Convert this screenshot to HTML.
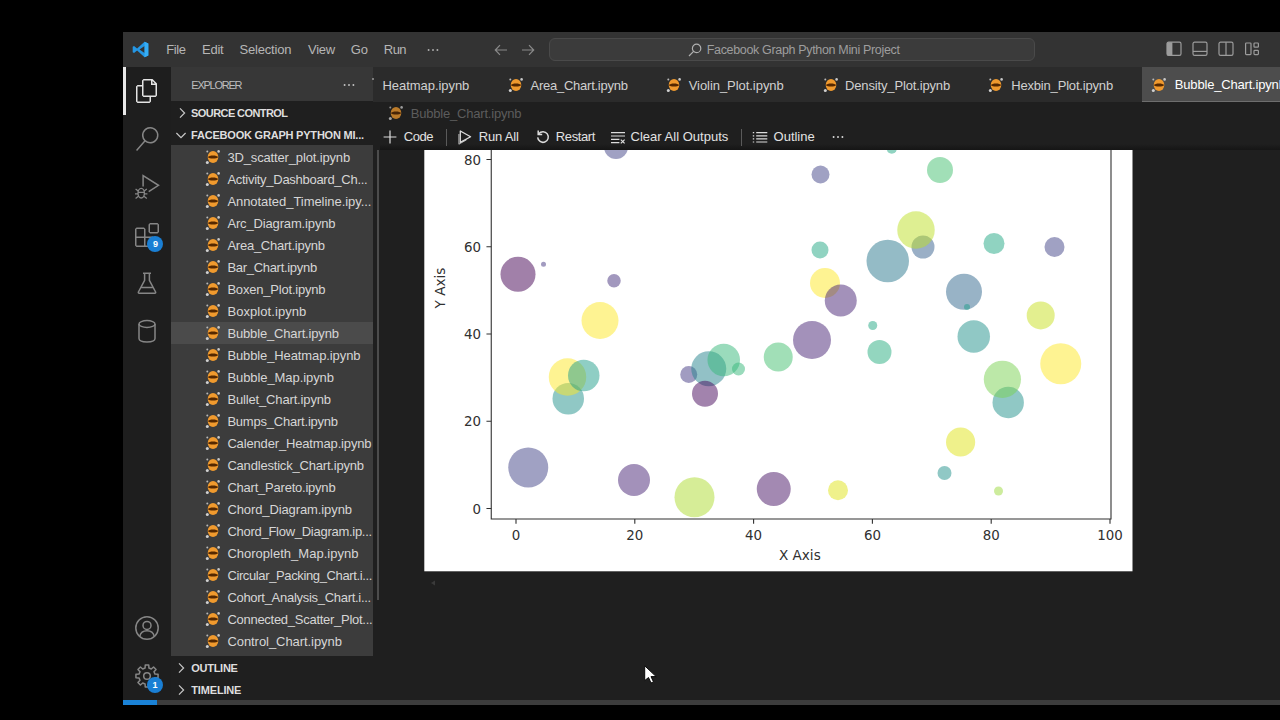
<!DOCTYPE html>
<html lang="en">
<head>
<meta charset="utf-8">
<title>Bubble_Chart.ipynb - Facebook Graph Python Mini Project - Visual Studio Code</title>
<style>
html,body{margin:0;padding:0;background:#000;}
body{width:1280px;height:720px;overflow:hidden;position:relative;font-family:"Liberation Sans",sans-serif;}
.b{position:absolute;}
.t{position:absolute;white-space:pre;line-height:20px;height:20px;font-family:"Liberation Sans",sans-serif;}
svg{position:absolute;overflow:visible;}
svg text{font-family:"DejaVu Sans","Liberation Sans",sans-serif;}
</style>
</head>
<body>
<!-- window -->
<div class="b" style="left:123px;top:32px;width:1157px;height:673px;background:#1f1f1f"></div>
<!-- title bar -->
<div class="b" style="left:123px;top:32px;width:1157px;height:35px;background:#333333"></div>
<div class="b" style="left:548.5px;top:38px;width:486.5px;height:22.6px;background:#3b3b3b;border:1px solid #4a4a4a;border-radius:6px;box-sizing:border-box"></div>
<!-- activity bar -->
<div class="b" style="left:123px;top:67px;width:48px;height:633px;background:#1e1e1e"></div>
<div class="b" style="left:123px;top:67px;width:2.5px;height:48px;background:#e8e8e8"></div>
<!-- sidebar -->
<div class="b" style="left:171px;top:66.8px;width:201.8px;height:34.7px;background:#373737"></div>
<div class="b" style="left:171px;top:145.4px;width:201.5px;height:510.7px;background:#3c3c3c"></div>
<div class="b" style="left:171px;top:322px;width:201.5px;height:22px;background:#4b4b4b"></div>
<div class="b" style="left:376.6px;top:149.6px;width:2.6px;height:450px;background:#4c4c4c"></div>
<!-- tab bar -->
<div class="b" style="left:372.5px;top:67px;width:907.5px;height:34.5px;background:#2b2b2b"></div>
<div class="b" style="left:1142px;top:67px;width:138px;height:35px;background:#4d4d4d"></div>
<div class="b" style="left:1142px;top:100.6px;width:138px;height:1.4px;background:#6e6e6e"></div>
<!-- toolbar shadow -->
<div class="b" style="left:380px;top:144px;width:900px;height:6px;background:linear-gradient(#1f1f1f,#151515)"></div>
<!-- toolbar separators -->
<div class="b" style="left:446.3px;top:129px;width:1px;height:17px;background:#5a5a5a"></div>
<div class="b" style="left:741px;top:129px;width:1px;height:17px;background:#5a5a5a"></div>
<!-- status bar -->
<div class="b" style="left:123px;top:700px;width:1157px;height:4.8px;background:#3c3c3c"></div>
<div class="b" style="left:123px;top:700px;width:34.3px;height:4.8px;background:#1a82d6"></div>
<!-- chart output -->
<svg width="1280" height="720" viewBox="0 0 1280 720" style="left:0;top:0">
<defs><clipPath id="cp"><rect x="424.3" y="150" width="708.2" height="421.29999999999995"/></clipPath></defs>
<rect x="424.3" y="150" width="708.2" height="421.3" fill="#ffffff"/>
<g clip-path="url(#cp)">
<g fill-opacity="0.5">
<circle cx="518" cy="274.25" r="17.5" fill="#440154"/>
<circle cx="543.5" cy="264.25" r="2.5" fill="#453781"/>
<circle cx="614" cy="280.75" r="6.75" fill="#46327e"/>
<circle cx="616" cy="147" r="12" fill="#414487"/>
<circle cx="600" cy="320.5" r="18.5" fill="#fde725"/>
<circle cx="820.5" cy="174.5" r="9" fill="#414487"/>
<circle cx="940" cy="170" r="13" fill="#44bf70"/>
<circle cx="891.75" cy="148.75" r="5" fill="#22a884"/>
<circle cx="923" cy="247" r="11.5" fill="#355f8d"/>
<circle cx="916" cy="230" r="18.75" fill="#bddf26"/>
<circle cx="820" cy="250" r="8.5" fill="#22a884"/>
<circle cx="887.75" cy="261" r="21.25" fill="#2a788e"/>
<circle cx="825" cy="283" r="15" fill="#fde725"/>
<circle cx="840.75" cy="300.5" r="16" fill="#482475"/>
<circle cx="994" cy="243.5" r="10.5" fill="#22a884"/>
<circle cx="1054.5" cy="247" r="10" fill="#414487"/>
<circle cx="964" cy="291.75" r="18" fill="#31688e"/>
<circle cx="967" cy="307" r="3" fill="#1f9e89"/>
<circle cx="1040.7" cy="315.4" r="14" fill="#c8e020"/>
<circle cx="568.25" cy="398.75" r="15.75" fill="#21918c"/>
<circle cx="567.5" cy="377" r="18.75" fill="#fde725"/>
<circle cx="583.75" cy="375.5" r="15.75" fill="#1f9e89"/>
<circle cx="528.25" cy="467.5" r="20" fill="#414487"/>
<circle cx="634" cy="480" r="16" fill="#482475"/>
<circle cx="694.5" cy="497.25" r="20" fill="#addc30"/>
<circle cx="688.75" cy="374.5" r="8.5" fill="#443983"/>
<circle cx="708.75" cy="368.75" r="17.5" fill="#25838e"/>
<circle cx="723.75" cy="360" r="16.25" fill="#35b779"/>
<circle cx="705" cy="393.75" r="13" fill="#46085c"/>
<circle cx="738.5" cy="369" r="6.5" fill="#35b779"/>
<circle cx="812" cy="340" r="19" fill="#482475"/>
<circle cx="778.25" cy="357" r="14.5" fill="#44bf70"/>
<circle cx="872.75" cy="325.5" r="4.5" fill="#22a884"/>
<circle cx="879.5" cy="352" r="12" fill="#28ae80"/>
<circle cx="973.75" cy="336.5" r="16.25" fill="#21918c"/>
<circle cx="1060.75" cy="363.75" r="20.5" fill="#fde725"/>
<circle cx="1008.2" cy="402.5" r="15.7" fill="#21918c"/>
<circle cx="1002.4" cy="379.3" r="18.6" fill="#7ad151"/>
<circle cx="960.6" cy="442" r="14.6" fill="#dfe318"/>
<circle cx="944.5" cy="473" r="7" fill="#21918c"/>
<circle cx="998.5" cy="491" r="4.5" fill="#9bd93c"/>
<circle cx="773.75" cy="489" r="17" fill="#471365"/>
<circle cx="838" cy="490.25" r="10" fill="#dfe318"/>
</g>
<path d="M491.25 100V519H1111V100" fill="none" stroke="#303030" stroke-width="1.1"/>
<path d="M516.00 519v4.8" stroke="#303030" stroke-width="1.1"/>
<path d="M634.80 519v4.8" stroke="#303030" stroke-width="1.1"/>
<path d="M753.60 519v4.8" stroke="#303030" stroke-width="1.1"/>
<path d="M872.40 519v4.8" stroke="#303030" stroke-width="1.1"/>
<path d="M991.20 519v4.8" stroke="#303030" stroke-width="1.1"/>
<path d="M1110.00 519v4.8" stroke="#303030" stroke-width="1.1"/>
<path d="M491.25 508.50h-4.8" stroke="#303030" stroke-width="1.1"/>
<path d="M491.25 421.25h-4.8" stroke="#303030" stroke-width="1.1"/>
<path d="M491.25 334.00h-4.8" stroke="#303030" stroke-width="1.1"/>
<path d="M491.25 246.75h-4.8" stroke="#303030" stroke-width="1.1"/>
<path d="M491.25 159.50h-4.8" stroke="#303030" stroke-width="1.1"/>
</g>
<text x="516.00" y="540" font-size="13.4" text-anchor="middle" fill="#303030">0</text>
<text x="634.80" y="540" font-size="13.4" text-anchor="middle" fill="#303030">20</text>
<text x="753.60" y="540" font-size="13.4" text-anchor="middle" fill="#303030">40</text>
<text x="872.40" y="540" font-size="13.4" text-anchor="middle" fill="#303030">60</text>
<text x="991.20" y="540" font-size="13.4" text-anchor="middle" fill="#303030">80</text>
<text x="1110.00" y="540" font-size="13.4" text-anchor="middle" fill="#303030">100</text>
<text x="481" y="513.50" font-size="13.4" text-anchor="end" fill="#303030">0</text>
<text x="481" y="426.25" font-size="13.4" text-anchor="end" fill="#303030">20</text>
<text x="481" y="339.00" font-size="13.4" text-anchor="end" fill="#303030">40</text>
<text x="481" y="251.75" font-size="13.4" text-anchor="end" fill="#303030">60</text>
<text x="481" y="164.50" font-size="13.4" text-anchor="end" fill="#303030">80</text>
<text x="799.8" y="560" font-size="13.6" text-anchor="middle" fill="#303030">X Axis</text>
<text transform="translate(444.8 288) rotate(-90)" font-size="13.6" text-anchor="middle" fill="#303030">Y Axis</text>
<path d="M435 580.5v5l-4 -2.5z" fill="#3a3a3a"/>
</svg>
<svg style="left:205.0px;top:149.1px" width="16" height="16" viewBox="0 0 16 16"><ellipse cx="8" cy="8" rx="5.3" ry="6" fill="#f09a2e"/><path d="M2.800 8C4.200 5.900 11.800 5.900 13.200 8C11.800 10.100 4.200 10.100 2.800 8z" fill="#552800"/><circle cx="2.3" cy="2.5" r="1" fill="#b8b8b8"/><circle cx="13.6" cy="2.4" r="1.3" fill="#c8c8c8"/><circle cx="2.3" cy="13.6" r="1.5" fill="#d0d0d0"/></svg>
<svg style="left:205.0px;top:171.1px" width="16" height="16" viewBox="0 0 16 16"><ellipse cx="8" cy="8" rx="5.3" ry="6" fill="#f09a2e"/><path d="M2.800 8C4.200 5.900 11.800 5.900 13.200 8C11.800 10.100 4.200 10.100 2.800 8z" fill="#552800"/><circle cx="2.3" cy="2.5" r="1" fill="#b8b8b8"/><circle cx="13.6" cy="2.4" r="1.3" fill="#c8c8c8"/><circle cx="2.3" cy="13.6" r="1.5" fill="#d0d0d0"/></svg>
<svg style="left:205.0px;top:193.1px" width="16" height="16" viewBox="0 0 16 16"><ellipse cx="8" cy="8" rx="5.3" ry="6" fill="#f09a2e"/><path d="M2.800 8C4.200 5.900 11.800 5.900 13.200 8C11.800 10.100 4.200 10.100 2.800 8z" fill="#552800"/><circle cx="2.3" cy="2.5" r="1" fill="#b8b8b8"/><circle cx="13.6" cy="2.4" r="1.3" fill="#c8c8c8"/><circle cx="2.3" cy="13.6" r="1.5" fill="#d0d0d0"/></svg>
<svg style="left:205.0px;top:215.1px" width="16" height="16" viewBox="0 0 16 16"><ellipse cx="8" cy="8" rx="5.3" ry="6" fill="#f09a2e"/><path d="M2.800 8C4.200 5.900 11.800 5.900 13.200 8C11.800 10.100 4.200 10.100 2.800 8z" fill="#552800"/><circle cx="2.3" cy="2.5" r="1" fill="#b8b8b8"/><circle cx="13.6" cy="2.4" r="1.3" fill="#c8c8c8"/><circle cx="2.3" cy="13.6" r="1.5" fill="#d0d0d0"/></svg>
<svg style="left:205.0px;top:237.1px" width="16" height="16" viewBox="0 0 16 16"><ellipse cx="8" cy="8" rx="5.3" ry="6" fill="#f09a2e"/><path d="M2.800 8C4.200 5.900 11.800 5.900 13.200 8C11.800 10.100 4.200 10.100 2.800 8z" fill="#552800"/><circle cx="2.3" cy="2.5" r="1" fill="#b8b8b8"/><circle cx="13.6" cy="2.4" r="1.3" fill="#c8c8c8"/><circle cx="2.3" cy="13.6" r="1.5" fill="#d0d0d0"/></svg>
<svg style="left:205.0px;top:259.1px" width="16" height="16" viewBox="0 0 16 16"><ellipse cx="8" cy="8" rx="5.3" ry="6" fill="#f09a2e"/><path d="M2.800 8C4.200 5.900 11.800 5.900 13.200 8C11.800 10.100 4.200 10.100 2.800 8z" fill="#552800"/><circle cx="2.3" cy="2.5" r="1" fill="#b8b8b8"/><circle cx="13.6" cy="2.4" r="1.3" fill="#c8c8c8"/><circle cx="2.3" cy="13.6" r="1.5" fill="#d0d0d0"/></svg>
<svg style="left:205.0px;top:281.1px" width="16" height="16" viewBox="0 0 16 16"><ellipse cx="8" cy="8" rx="5.3" ry="6" fill="#f09a2e"/><path d="M2.800 8C4.200 5.900 11.800 5.900 13.200 8C11.800 10.100 4.200 10.100 2.800 8z" fill="#552800"/><circle cx="2.3" cy="2.5" r="1" fill="#b8b8b8"/><circle cx="13.6" cy="2.4" r="1.3" fill="#c8c8c8"/><circle cx="2.3" cy="13.6" r="1.5" fill="#d0d0d0"/></svg>
<svg style="left:205.0px;top:303.1px" width="16" height="16" viewBox="0 0 16 16"><ellipse cx="8" cy="8" rx="5.3" ry="6" fill="#f09a2e"/><path d="M2.800 8C4.200 5.900 11.800 5.900 13.200 8C11.800 10.100 4.200 10.100 2.800 8z" fill="#552800"/><circle cx="2.3" cy="2.5" r="1" fill="#b8b8b8"/><circle cx="13.6" cy="2.4" r="1.3" fill="#c8c8c8"/><circle cx="2.3" cy="13.6" r="1.5" fill="#d0d0d0"/></svg>
<svg style="left:205.0px;top:325.1px" width="16" height="16" viewBox="0 0 16 16"><ellipse cx="8" cy="8" rx="5.3" ry="6" fill="#f09a2e"/><path d="M2.800 8C4.200 5.900 11.800 5.900 13.200 8C11.800 10.100 4.200 10.100 2.800 8z" fill="#552800"/><circle cx="2.3" cy="2.5" r="1" fill="#b8b8b8"/><circle cx="13.6" cy="2.4" r="1.3" fill="#c8c8c8"/><circle cx="2.3" cy="13.6" r="1.5" fill="#d0d0d0"/></svg>
<svg style="left:205.0px;top:347.1px" width="16" height="16" viewBox="0 0 16 16"><ellipse cx="8" cy="8" rx="5.3" ry="6" fill="#f09a2e"/><path d="M2.800 8C4.200 5.900 11.800 5.900 13.200 8C11.800 10.100 4.200 10.100 2.800 8z" fill="#552800"/><circle cx="2.3" cy="2.5" r="1" fill="#b8b8b8"/><circle cx="13.6" cy="2.4" r="1.3" fill="#c8c8c8"/><circle cx="2.3" cy="13.6" r="1.5" fill="#d0d0d0"/></svg>
<svg style="left:205.0px;top:369.1px" width="16" height="16" viewBox="0 0 16 16"><ellipse cx="8" cy="8" rx="5.3" ry="6" fill="#f09a2e"/><path d="M2.800 8C4.200 5.900 11.800 5.900 13.200 8C11.800 10.100 4.200 10.100 2.800 8z" fill="#552800"/><circle cx="2.3" cy="2.5" r="1" fill="#b8b8b8"/><circle cx="13.6" cy="2.4" r="1.3" fill="#c8c8c8"/><circle cx="2.3" cy="13.6" r="1.5" fill="#d0d0d0"/></svg>
<svg style="left:205.0px;top:391.1px" width="16" height="16" viewBox="0 0 16 16"><ellipse cx="8" cy="8" rx="5.3" ry="6" fill="#f09a2e"/><path d="M2.800 8C4.200 5.900 11.800 5.900 13.200 8C11.800 10.100 4.200 10.100 2.800 8z" fill="#552800"/><circle cx="2.3" cy="2.5" r="1" fill="#b8b8b8"/><circle cx="13.6" cy="2.4" r="1.3" fill="#c8c8c8"/><circle cx="2.3" cy="13.6" r="1.5" fill="#d0d0d0"/></svg>
<svg style="left:205.0px;top:413.1px" width="16" height="16" viewBox="0 0 16 16"><ellipse cx="8" cy="8" rx="5.3" ry="6" fill="#f09a2e"/><path d="M2.800 8C4.200 5.900 11.800 5.900 13.200 8C11.800 10.100 4.200 10.100 2.800 8z" fill="#552800"/><circle cx="2.3" cy="2.5" r="1" fill="#b8b8b8"/><circle cx="13.6" cy="2.4" r="1.3" fill="#c8c8c8"/><circle cx="2.3" cy="13.6" r="1.5" fill="#d0d0d0"/></svg>
<svg style="left:205.0px;top:435.1px" width="16" height="16" viewBox="0 0 16 16"><ellipse cx="8" cy="8" rx="5.3" ry="6" fill="#f09a2e"/><path d="M2.800 8C4.200 5.900 11.800 5.900 13.200 8C11.800 10.100 4.200 10.100 2.800 8z" fill="#552800"/><circle cx="2.3" cy="2.5" r="1" fill="#b8b8b8"/><circle cx="13.6" cy="2.4" r="1.3" fill="#c8c8c8"/><circle cx="2.3" cy="13.6" r="1.5" fill="#d0d0d0"/></svg>
<svg style="left:205.0px;top:457.1px" width="16" height="16" viewBox="0 0 16 16"><ellipse cx="8" cy="8" rx="5.3" ry="6" fill="#f09a2e"/><path d="M2.800 8C4.200 5.900 11.800 5.900 13.200 8C11.800 10.100 4.200 10.100 2.800 8z" fill="#552800"/><circle cx="2.3" cy="2.5" r="1" fill="#b8b8b8"/><circle cx="13.6" cy="2.4" r="1.3" fill="#c8c8c8"/><circle cx="2.3" cy="13.6" r="1.5" fill="#d0d0d0"/></svg>
<svg style="left:205.0px;top:479.1px" width="16" height="16" viewBox="0 0 16 16"><ellipse cx="8" cy="8" rx="5.3" ry="6" fill="#f09a2e"/><path d="M2.800 8C4.200 5.900 11.800 5.900 13.200 8C11.800 10.100 4.200 10.100 2.800 8z" fill="#552800"/><circle cx="2.3" cy="2.5" r="1" fill="#b8b8b8"/><circle cx="13.6" cy="2.4" r="1.3" fill="#c8c8c8"/><circle cx="2.3" cy="13.6" r="1.5" fill="#d0d0d0"/></svg>
<svg style="left:205.0px;top:501.1px" width="16" height="16" viewBox="0 0 16 16"><ellipse cx="8" cy="8" rx="5.3" ry="6" fill="#f09a2e"/><path d="M2.800 8C4.200 5.900 11.800 5.900 13.200 8C11.800 10.100 4.200 10.100 2.800 8z" fill="#552800"/><circle cx="2.3" cy="2.5" r="1" fill="#b8b8b8"/><circle cx="13.6" cy="2.4" r="1.3" fill="#c8c8c8"/><circle cx="2.3" cy="13.6" r="1.5" fill="#d0d0d0"/></svg>
<svg style="left:205.0px;top:523.1px" width="16" height="16" viewBox="0 0 16 16"><ellipse cx="8" cy="8" rx="5.3" ry="6" fill="#f09a2e"/><path d="M2.800 8C4.200 5.900 11.800 5.900 13.200 8C11.800 10.100 4.200 10.100 2.800 8z" fill="#552800"/><circle cx="2.3" cy="2.5" r="1" fill="#b8b8b8"/><circle cx="13.6" cy="2.4" r="1.3" fill="#c8c8c8"/><circle cx="2.3" cy="13.6" r="1.5" fill="#d0d0d0"/></svg>
<svg style="left:205.0px;top:545.1px" width="16" height="16" viewBox="0 0 16 16"><ellipse cx="8" cy="8" rx="5.3" ry="6" fill="#f09a2e"/><path d="M2.800 8C4.200 5.900 11.800 5.900 13.200 8C11.800 10.100 4.200 10.100 2.800 8z" fill="#552800"/><circle cx="2.3" cy="2.5" r="1" fill="#b8b8b8"/><circle cx="13.6" cy="2.4" r="1.3" fill="#c8c8c8"/><circle cx="2.3" cy="13.6" r="1.5" fill="#d0d0d0"/></svg>
<svg style="left:205.0px;top:567.1px" width="16" height="16" viewBox="0 0 16 16"><ellipse cx="8" cy="8" rx="5.3" ry="6" fill="#f09a2e"/><path d="M2.800 8C4.200 5.900 11.800 5.900 13.200 8C11.800 10.100 4.200 10.100 2.800 8z" fill="#552800"/><circle cx="2.3" cy="2.5" r="1" fill="#b8b8b8"/><circle cx="13.6" cy="2.4" r="1.3" fill="#c8c8c8"/><circle cx="2.3" cy="13.6" r="1.5" fill="#d0d0d0"/></svg>
<svg style="left:205.0px;top:589.1px" width="16" height="16" viewBox="0 0 16 16"><ellipse cx="8" cy="8" rx="5.3" ry="6" fill="#f09a2e"/><path d="M2.800 8C4.200 5.900 11.800 5.900 13.200 8C11.800 10.100 4.200 10.100 2.800 8z" fill="#552800"/><circle cx="2.3" cy="2.5" r="1" fill="#b8b8b8"/><circle cx="13.6" cy="2.4" r="1.3" fill="#c8c8c8"/><circle cx="2.3" cy="13.6" r="1.5" fill="#d0d0d0"/></svg>
<svg style="left:205.0px;top:611.1px" width="16" height="16" viewBox="0 0 16 16"><ellipse cx="8" cy="8" rx="5.3" ry="6" fill="#f09a2e"/><path d="M2.800 8C4.200 5.900 11.800 5.900 13.200 8C11.800 10.100 4.200 10.100 2.800 8z" fill="#552800"/><circle cx="2.3" cy="2.5" r="1" fill="#b8b8b8"/><circle cx="13.6" cy="2.4" r="1.3" fill="#c8c8c8"/><circle cx="2.3" cy="13.6" r="1.5" fill="#d0d0d0"/></svg>
<svg style="left:205.0px;top:633.1px" width="16" height="16" viewBox="0 0 16 16"><ellipse cx="8" cy="8" rx="5.3" ry="6" fill="#f09a2e"/><path d="M2.800 8C4.200 5.900 11.800 5.900 13.200 8C11.800 10.100 4.200 10.100 2.800 8z" fill="#552800"/><circle cx="2.3" cy="2.5" r="1" fill="#b8b8b8"/><circle cx="13.6" cy="2.4" r="1.3" fill="#c8c8c8"/><circle cx="2.3" cy="13.6" r="1.5" fill="#d0d0d0"/></svg>
<svg style="left:508.0px;top:76.6px" width="16" height="16" viewBox="0 0 16 16"><ellipse cx="8" cy="8" rx="5.3" ry="6" fill="#f09a2e"/><path d="M2.800 8C4.200 5.900 11.800 5.900 13.200 8C11.800 10.100 4.200 10.100 2.800 8z" fill="#552800"/><circle cx="2.3" cy="2.5" r="1" fill="#b8b8b8"/><circle cx="13.6" cy="2.4" r="1.3" fill="#c8c8c8"/><circle cx="2.3" cy="13.6" r="1.5" fill="#d0d0d0"/></svg>
<svg style="left:665.8px;top:76.6px" width="16" height="16" viewBox="0 0 16 16"><ellipse cx="8" cy="8" rx="5.3" ry="6" fill="#f09a2e"/><path d="M2.800 8C4.200 5.900 11.800 5.900 13.200 8C11.800 10.100 4.200 10.100 2.800 8z" fill="#552800"/><circle cx="2.3" cy="2.5" r="1" fill="#b8b8b8"/><circle cx="13.6" cy="2.4" r="1.3" fill="#c8c8c8"/><circle cx="2.3" cy="13.6" r="1.5" fill="#d0d0d0"/></svg>
<svg style="left:822.5px;top:76.6px" width="16" height="16" viewBox="0 0 16 16"><ellipse cx="8" cy="8" rx="5.3" ry="6" fill="#f09a2e"/><path d="M2.800 8C4.200 5.900 11.800 5.900 13.200 8C11.800 10.100 4.200 10.100 2.800 8z" fill="#552800"/><circle cx="2.3" cy="2.5" r="1" fill="#b8b8b8"/><circle cx="13.6" cy="2.4" r="1.3" fill="#c8c8c8"/><circle cx="2.3" cy="13.6" r="1.5" fill="#d0d0d0"/></svg>
<svg style="left:988.2px;top:76.6px" width="16" height="16" viewBox="0 0 16 16"><ellipse cx="8" cy="8" rx="5.3" ry="6" fill="#f09a2e"/><path d="M2.800 8C4.200 5.900 11.800 5.900 13.200 8C11.800 10.100 4.200 10.100 2.800 8z" fill="#552800"/><circle cx="2.3" cy="2.5" r="1" fill="#b8b8b8"/><circle cx="13.6" cy="2.4" r="1.3" fill="#c8c8c8"/><circle cx="2.3" cy="13.6" r="1.5" fill="#d0d0d0"/></svg>
<svg style="left:1151.4px;top:76.6px" width="16" height="16" viewBox="0 0 16 16"><ellipse cx="8" cy="8" rx="5.3" ry="6" fill="#f09a2e"/><path d="M2.800 8C4.200 5.900 11.800 5.900 13.200 8C11.800 10.100 4.200 10.100 2.800 8z" fill="#552800"/><circle cx="2.3" cy="2.5" r="1" fill="#b8b8b8"/><circle cx="13.6" cy="2.4" r="1.3" fill="#c8c8c8"/><circle cx="2.3" cy="13.6" r="1.5" fill="#d0d0d0"/></svg>
<svg style="left:388.3px;top:105.0px" width="16" height="16" viewBox="0 0 16 16" opacity="0.75"><ellipse cx="8" cy="8" rx="5.3" ry="6" fill="#f09a2e"/><path d="M2.800 8C4.200 5.900 11.800 5.900 13.200 8C11.800 10.100 4.200 10.100 2.800 8z" fill="#552800"/><circle cx="2.3" cy="2.5" r="1" fill="#b8b8b8"/><circle cx="13.6" cy="2.4" r="1.3" fill="#c8c8c8"/><circle cx="2.3" cy="13.6" r="1.5" fill="#d0d0d0"/></svg>
<svg style="left:132px;top:40.5px" width="17" height="17" viewBox="0 0 100 100" ><path d="M74 4 L96 14 V86 L74 96 L30 56 L12 70 L4 66 V34 L12 30 L30 44 Z M74 30 L44 50 L74 70 Z" fill="#2496e4" fill-rule="evenodd"/><path d="M74 4 L96 14 V86 L74 96 Z" fill="#35adf5"/></svg>
<svg style="left:425px;top:41.5px" width="16" height="16" viewBox="0 0 16 16" ><circle cx="3.5999999999999996" cy="8" r="0.95" fill="#b0b0b0"/><circle cx="8.0" cy="8" r="0.95" fill="#b0b0b0"/><circle cx="12.4" cy="8" r="0.95" fill="#b0b0b0"/></svg>
<svg style="left:493px;top:41.5px" width="16" height="16" viewBox="0 0 16 16" ><path d="M14 8H2.5M7 3.2L2.3 8L7 12.8" fill="none" stroke="#8a8a8a" stroke-width="1.2"/></svg>
<svg style="left:519.5px;top:41.5px" width="16" height="16" viewBox="0 0 16 16" ><path d="M2 8H13.5M9 3.2L13.7 8L9 12.8" fill="none" stroke="#8a8a8a" stroke-width="1.2"/></svg>
<svg style="left:687px;top:41.5px" width="16" height="16" viewBox="0 0 16 16" ><circle cx="9.6" cy="6.4" r="4.2" fill="none" stroke="#b0b0b0" stroke-width="1.2"/><path d="M6.6 9.4L2 14" stroke="#b0b0b0" stroke-width="1.2"/></svg>
<svg style="left:1166.0px;top:41px" width="16" height="16" viewBox="0 0 16 16" ><rect x="1" y="1.2" width="14" height="13.200" rx="1.600" fill="none" stroke="#9c9c9c" stroke-width="1.2"/><path d="M1 2.4q0-1.2 1.2-1.2H6.400V14.400H2.200q-1.200 0-1.200-1.200z" fill="#9c9c9c"/></svg>
<svg style="left:1192.0px;top:41px" width="16" height="16" viewBox="0 0 16 16" ><rect x="1" y="1.2" width="14" height="13.200" rx="1.600" fill="none" stroke="#9c9c9c" stroke-width="1.2"/><path d="M1 10.4H15" stroke="#9c9c9c" stroke-width="1.2"/></svg>
<svg style="left:1218.0px;top:41px" width="16" height="16" viewBox="0 0 16 16" ><rect x="1" y="1.2" width="14" height="13.200" rx="1.600" fill="none" stroke="#9c9c9c" stroke-width="1.2"/><path d="M8 1.200V14.400" stroke="#9c9c9c" stroke-width="1.2"/></svg>
<svg style="left:1244.0px;top:41px" width="16" height="16" viewBox="0 0 16 16" ><rect x="1.6" y="2" width="5.4" height="11.6" rx="0.8" fill="none" stroke="#9c9c9c" stroke-width="1.2"/><rect x="10" y="2" width="4.4" height="4.2" rx="0.8" fill="none" stroke="#9c9c9c" stroke-width="1.2"/><rect x="10" y="9.4" width="4.4" height="4.2" rx="0.8" fill="none" stroke="#9c9c9c" stroke-width="1.2"/></svg>
<svg style="left:135px;top:79px" width="24" height="24" viewBox="0 0 24 24" ><path d="M17.5 0h-9L7 1.5V6H2.5L1 7.5v15.07L2.500 24h12.07L16 22.57V18h4.7l1.3-1.43V4.5L17.5 0zm0 2.12l2.38 2.38H17.5V2.120zm-3 20.38h-12v-15H7v9.07L8.5 18h6v4.5zm6-6h-12v-15H16V6h4.5v10.5z" fill="#e4e4e4"/></svg>
<svg style="left:135px;top:127px" width="24" height="24" viewBox="0 0 24 24" ><path d="M15.25 0a8.25 8.25 0 0 0-6.18 13.72L1 22.88l1.12 1 8.05-9.120A8.251 8.251 0 1 0 15.25.010V0zm0 15a6.75 6.75 0 1 1 0-13.5 6.750 6.750 0 0 1 0 13.5z" fill="#868686"/></svg>
<svg style="left:135px;top:175px" width="24" height="24" viewBox="0 0 24 24" ><path d="M8.100 11.400V0.500L23.500 10.300L13.700 16.700" fill="none" stroke="#868686" stroke-width="1.500" stroke-linejoin="miter"/><ellipse cx="6.200" cy="18.200" rx="3.200" ry="4.800" fill="none" stroke="#868686" stroke-width="1.400"/><path d="M3 17.300H9.400M0.600 14L3.200 16M11.800 14L9.200 16M0 18.900H3M9.400 18.900H12.400M0.600 23.400L3.400 21.200M11.800 23.400L9 21.200" fill="none" stroke="#868686" stroke-width="1.300"/></svg>
<svg style="left:135px;top:223px" width="24" height="24" viewBox="0 0 24 24" ><path d="M13.5 1.5L15 0h7.5L24 1.5V9l-1.5 1.5H15L13.5 9V1.5zm1.5 0V9h7.5V1.5H15zM0 15V6l1.5-1.5H9L10.5 6v7.5H18l1.5 1.5v7.5L18 24H1.5L0 22.500V15zm9-1.5V6H1.5v7.5H9zM9 15H1.5v7.5H9V15zm1.5 7.5H18V15h-7.5v7.5z" fill="#868686"/></svg>
<svg style="left:135px;top:271px" width="24" height="24" viewBox="0 0 24 24" ><path d="M8 2.200H16M9.600 2.200V9.400L3.400 21.000Q3 22.200 4.200 22.200H19.800Q21 22.200 20.600 21.000L14.400 9.400V2.200M6.200 16.400H17.800" fill="none" stroke="#868686" stroke-width="1.5" stroke-linejoin="round"/></svg>
<svg style="left:135px;top:319px" width="24" height="24" viewBox="0 0 24 24" ><ellipse cx="12" cy="5" rx="8" ry="3.4" fill="none" stroke="#868686" stroke-width="1.5"/><path d="M4 5V19.600C4 21.600 7.600 23 12 23S20 21.600 20 19.600V5" fill="none" stroke="#868686" stroke-width="1.5"/></svg>
<svg style="left:135px;top:616px" width="24" height="24" viewBox="0 0 24 24" ><circle cx="12" cy="12" r="11.2" fill="none" stroke="#868686" stroke-width="1.5"/><circle cx="12" cy="9.400" r="4" fill="none" stroke="#868686" stroke-width="1.5"/><path d="M4.800 20.200C5.600 16.200 8.400 14.800 12 14.800S18.400 16.200 19.200 20.200" fill="none" stroke="#868686" stroke-width="1.5"/></svg>
<svg style="left:134.7px;top:663.8px" width="24" height="24" viewBox="0 0 24 24" ><path d="M19.97 10.09L23.06 10.25L23.06 13.75L19.97 13.91L18.99 16.28L21.06 18.58L18.58 21.06L16.28 18.99L13.91 19.97L13.75 23.06L10.25 23.06L10.09 19.97L7.72 18.99L5.42 21.06L2.94 18.58L5.01 16.28L4.03 13.91L0.94 13.75L0.94 10.25L4.03 10.09L5.01 7.72L2.94 5.42L5.42 2.94L7.72 5.01L10.09 4.03L10.25 0.94L13.75 0.94L13.91 4.03L16.28 5.01L18.58 2.94L21.06 5.42L18.99 7.72Z" fill="none" stroke="#868686" stroke-width="1.500" stroke-linejoin="round"/><circle cx="12" cy="12" r="3.300" fill="none" stroke="#868686" stroke-width="1.500"/></svg>
<div class="b" style="left:147.400px;top:235.700px;width:16px;height:16px;border-radius:8px;background:#1a7fd4"></div>
<span class="t" style="left:152.900px;top:233.900px;font-size:9px;font-weight:700;color:#fff">9</span>
<div class="b" style="left:147px;top:677px;width:16px;height:16px;border-radius:8px;background:#1a7fd4"></div>
<span class="t" style="left:152.500px;top:675.200px;font-size:9px;font-weight:700;color:#fff">1</span>
<svg style="left:341px;top:77px" width="16" height="16" viewBox="0 0 16 16" ><circle cx="3.5999999999999996" cy="8" r="0.95" fill="#c4c4c4"/><circle cx="8.0" cy="8" r="0.95" fill="#c4c4c4"/><circle cx="12.4" cy="8" r="0.95" fill="#c4c4c4"/></svg>
<svg style="left:173.5px;top:105.1px" width="16" height="16" viewBox="0 0 16 16" ><path d="M6 3.400L10.600 8L6 12.600" fill="none" stroke="#c8c8c8" stroke-width="1.200"/></svg>
<svg style="left:173.2px;top:127.4px" width="16" height="16" viewBox="0 0 16 16" ><path d="M3.400 6L8 10.600L12.600 6" fill="none" stroke="#c8c8c8" stroke-width="1.200"/></svg>
<svg style="left:173.4px;top:659.7px" width="16" height="16" viewBox="0 0 16 16" ><path d="M6 3.400L10.600 8L6 12.600" fill="none" stroke="#c8c8c8" stroke-width="1.200"/></svg>
<svg style="left:173.4px;top:681.8px" width="16" height="16" viewBox="0 0 16 16" ><path d="M6 3.400L10.600 8L6 12.600" fill="none" stroke="#c8c8c8" stroke-width="1.200"/></svg>
<div class="b" style="left:372.300px;top:78px;width:1.600px;height:1.600px;border-radius:1px;background:#9a9a9a"></div>
<svg style="left:381.5px;top:128.8px" width="16" height="16" viewBox="0 0 16 16" ><path d="M8 1.600V14.400M1.600 8H14.400" stroke="#dcdcdc" stroke-width="1.200"/></svg>
<svg style="left:458px;top:128.5px" width="16" height="16" viewBox="0 0 16 16" ><path d="M2.300 2V13.400L12.600 7.700Z" fill="none" stroke="#dcdcdc" stroke-width="1.300" stroke-linejoin="round"/><path d="M0.900 5V15.200L8.600 10.800" fill="none" stroke="#dcdcdc" stroke-width="1" stroke-linejoin="round" opacity="0.800"/></svg>
<svg style="left:534.6px;top:128.5px" width="16" height="16" viewBox="0 0 16 16" ><path d="M3.800 4.800A5.300 5.300 0 1 1 2.700 8.400" fill="none" stroke="#dcdcdc" stroke-width="1.500"/><path d="M3.200 1.400V5.400H7.200" fill="none" stroke="#dcdcdc" stroke-width="1.500"/></svg>
<svg style="left:609.8px;top:129.5px" width="16" height="16" viewBox="0 0 16 16" ><path d="M1 2.700H15M1 6H15M1 9.300H9.400M1 12.600H9.400" stroke="#dcdcdc" stroke-width="1.200"/><path d="M10.800 9.600L14.600 13.400M14.600 9.600L10.800 13.400" stroke="#dcdcdc" stroke-width="1.200"/></svg>
<svg style="left:752px;top:129.5px" width="16" height="16" viewBox="0 0 16 16" ><path d="M4.200 2.700H15.300M4.200 5.800H15.300M4.200 8.900H15.300M4.200 12H15.300" stroke="#dcdcdc" stroke-width="1.200"/><path d="M0.800 2.700H2.200M0.800 5.800H2.200M0.800 8.900H2.200M0.800 12H2.200" stroke="#dcdcdc" stroke-width="1.200"/></svg>
<svg style="left:830.3px;top:128.9px" width="16" height="16" viewBox="0 0 16 16" ><circle cx="3.5999999999999996" cy="8" r="0.95" fill="#dcdcdc"/><circle cx="8.0" cy="8" r="0.95" fill="#dcdcdc"/><circle cx="12.4" cy="8" r="0.95" fill="#dcdcdc"/></svg>
<svg style="left:0;top:0" width="1280" height="720" viewBox="0 0 1280 720"><path d="M644.700 665.800V680.600L648.500 677.500L651 683L653.500 681.900L651 676.600H656.200Z" fill="#ffffff" stroke="#0a0a0a" stroke-width="1" stroke-linejoin="round"/></svg>
<span class="t" style="left:166.3px;top:39.8px;font-size:13px;font-weight:400;color:#b6b6b6;letter-spacing:-0.438px;">File</span>
<span class="t" style="left:202.0px;top:39.8px;font-size:13px;font-weight:400;color:#b6b6b6;letter-spacing:-0.227px;">Edit</span>
<span class="t" style="left:239.5px;top:39.8px;font-size:13px;font-weight:400;color:#b6b6b6;letter-spacing:-0.187px;">Selection</span>
<span class="t" style="left:308.0px;top:39.8px;font-size:13px;font-weight:400;color:#b6b6b6;letter-spacing:-0.238px;">View</span>
<span class="t" style="left:350.8px;top:39.8px;font-size:13px;font-weight:400;color:#b6b6b6;letter-spacing:-0.272px;">Go</span>
<span class="t" style="left:383.8px;top:39.8px;font-size:13px;font-weight:400;color:#b6b6b6;letter-spacing:-0.553px;">Run</span>
<span class="t" style="left:706.8px;top:39.7px;font-size:12.5px;font-weight:400;color:#9e9e9e;letter-spacing:-0.338px;">Facebook Graph Python Mini Project</span>
<span class="t" style="left:191.3px;top:75.4px;font-size:11px;font-weight:400;color:#bdbdbd;letter-spacing:-1.240px;">EXPLORER</span>
<span class="t" style="left:191.1px;top:102.6px;font-size:11px;font-weight:700;color:#dedede;letter-spacing:-0.586px;">SOURCE CONTROL</span>
<span class="t" style="left:191.1px;top:124.6px;font-size:11px;font-weight:700;color:#dedede;letter-spacing:-0.210px;">FACEBOOK GRAPH PYTHON MI...</span>
<span class="t" style="left:191.3px;top:658.0px;font-size:11px;font-weight:700;color:#dedede;letter-spacing:-0.283px;">OUTLINE</span>
<span class="t" style="left:191.3px;top:680.0px;font-size:11px;font-weight:700;color:#dedede;letter-spacing:-0.168px;">TIMELINE</span>
<span class="t" style="left:227.4px;top:147.9px;font-size:13px;font-weight:400;color:#d6d6d6;letter-spacing:-0.150px;">3D_scatter_plot.ipynb</span>
<span class="t" style="left:227.4px;top:169.9px;font-size:13px;font-weight:400;color:#d6d6d6;letter-spacing:-0.279px;">Activity_Dashboard_Ch...</span>
<span class="t" style="left:227.4px;top:191.9px;font-size:13px;font-weight:400;color:#d6d6d6;letter-spacing:-0.050px;">Annotated_Timeline.ipy...</span>
<span class="t" style="left:227.4px;top:213.9px;font-size:13px;font-weight:400;color:#d6d6d6;letter-spacing:-0.150px;">Arc_Diagram.ipynb</span>
<span class="t" style="left:227.4px;top:235.9px;font-size:13px;font-weight:400;color:#d6d6d6;letter-spacing:-0.242px;">Area_Chart.ipynb</span>
<span class="t" style="left:227.4px;top:257.9px;font-size:13px;font-weight:400;color:#d6d6d6;letter-spacing:-0.297px;">Bar_Chart.ipynb</span>
<span class="t" style="left:227.4px;top:279.9px;font-size:13px;font-weight:400;color:#d6d6d6;letter-spacing:-0.199px;">Boxen_Plot.ipynb</span>
<span class="t" style="left:227.4px;top:301.9px;font-size:13px;font-weight:400;color:#d6d6d6;letter-spacing:0.072px;">Boxplot.ipynb</span>
<span class="t" style="left:227.4px;top:323.9px;font-size:13px;font-weight:400;color:#d6d6d6;letter-spacing:-0.150px;">Bubble_Chart.ipynb</span>
<span class="t" style="left:227.4px;top:345.9px;font-size:13px;font-weight:400;color:#d6d6d6;letter-spacing:-0.108px;">Bubble_Heatmap.ipynb</span>
<span class="t" style="left:227.4px;top:367.9px;font-size:13px;font-weight:400;color:#d6d6d6;letter-spacing:-0.075px;">Bubble_Map.ipynb</span>
<span class="t" style="left:227.4px;top:389.9px;font-size:13px;font-weight:400;color:#d6d6d6;letter-spacing:-0.152px;">Bullet_Chart.ipynb</span>
<span class="t" style="left:227.4px;top:411.9px;font-size:13px;font-weight:400;color:#d6d6d6;letter-spacing:-0.216px;">Bumps_Chart.ipynb</span>
<span class="t" style="left:227.4px;top:433.9px;font-size:13px;font-weight:400;color:#d6d6d6;letter-spacing:-0.156px;">Calender_Heatmap.ipynb</span>
<span class="t" style="left:227.4px;top:455.9px;font-size:13px;font-weight:400;color:#d6d6d6;letter-spacing:-0.192px;">Candlestick_Chart.ipynb</span>
<span class="t" style="left:227.4px;top:477.9px;font-size:13px;font-weight:400;color:#d6d6d6;letter-spacing:-0.223px;">Chart_Pareto.ipynb</span>
<span class="t" style="left:227.4px;top:499.9px;font-size:13px;font-weight:400;color:#d6d6d6;letter-spacing:-0.103px;">Chord_Diagram.ipynb</span>
<span class="t" style="left:227.4px;top:521.9px;font-size:13px;font-weight:400;color:#d6d6d6;letter-spacing:-0.271px;">Chord_Flow_Diagram.ip...</span>
<span class="t" style="left:227.4px;top:543.9px;font-size:13px;font-weight:400;color:#d6d6d6;letter-spacing:0.009px;">Choropleth_Map.ipynb</span>
<span class="t" style="left:227.4px;top:565.9px;font-size:13px;font-weight:400;color:#d6d6d6;letter-spacing:-0.375px;">Circular_Packing_Chart.i...</span>
<span class="t" style="left:227.4px;top:587.9px;font-size:13px;font-weight:400;color:#d6d6d6;letter-spacing:-0.289px;">Cohort_Analysis_Chart.i...</span>
<span class="t" style="left:227.4px;top:609.9px;font-size:13px;font-weight:400;color:#d6d6d6;letter-spacing:-0.271px;">Connected_Scatter_Plot...</span>
<span class="t" style="left:227.4px;top:631.9px;font-size:13px;font-weight:400;color:#d6d6d6;letter-spacing:-0.059px;">Control_Chart.ipynb</span>
<span class="t" style="left:382.5px;top:75.5px;font-size:13px;font-weight:400;color:#d0d0d0;letter-spacing:-0.050px;">Heatmap.ipynb</span>
<span class="t" style="left:530.5px;top:75.5px;font-size:13px;font-weight:400;color:#d0d0d0;letter-spacing:-0.248px;">Area_Chart.ipynb</span>
<span class="t" style="left:688.7px;top:75.5px;font-size:13px;font-weight:400;color:#d0d0d0;letter-spacing:-0.052px;">Violin_Plot.ipynb</span>
<span class="t" style="left:845.0px;top:75.5px;font-size:13px;font-weight:400;color:#d0d0d0;letter-spacing:-0.148px;">Density_Plot.ipynb</span>
<span class="t" style="left:1011.2px;top:75.5px;font-size:13px;font-weight:400;color:#d0d0d0;letter-spacing:-0.176px;">Hexbin_Plot.ipynb</span>
<span class="t" style="left:1174.8px;top:75.4px;font-size:13px;font-weight:400;color:#ffffff;letter-spacing:-0.184px;">Bubble_Chart.ipynb</span>
<span class="t" style="left:410.8px;top:103.5px;font-size:13px;font-weight:400;color:#5c5c5c;letter-spacing:-0.206px;">Bubble_Chart.ipynb</span>
<span class="t" style="left:403.8px;top:127.4px;font-size:13px;font-weight:400;color:#e2e2e2;letter-spacing:-0.470px;">Code</span>
<span class="t" style="left:478.8px;top:127.4px;font-size:13px;font-weight:400;color:#e2e2e2;letter-spacing:-0.172px;">Run All</span>
<span class="t" style="left:555.8px;top:127.4px;font-size:13px;font-weight:400;color:#e2e2e2;letter-spacing:-0.387px;">Restart</span>
<span class="t" style="left:630.5px;top:127.4px;font-size:13px;font-weight:400;color:#e2e2e2;letter-spacing:0.015px;">Clear All Outputs</span>
<span class="t" style="left:773.6px;top:127.4px;font-size:13px;font-weight:400;color:#e2e2e2;letter-spacing:-0.029px;">Outline</span>
</body>
</html>
